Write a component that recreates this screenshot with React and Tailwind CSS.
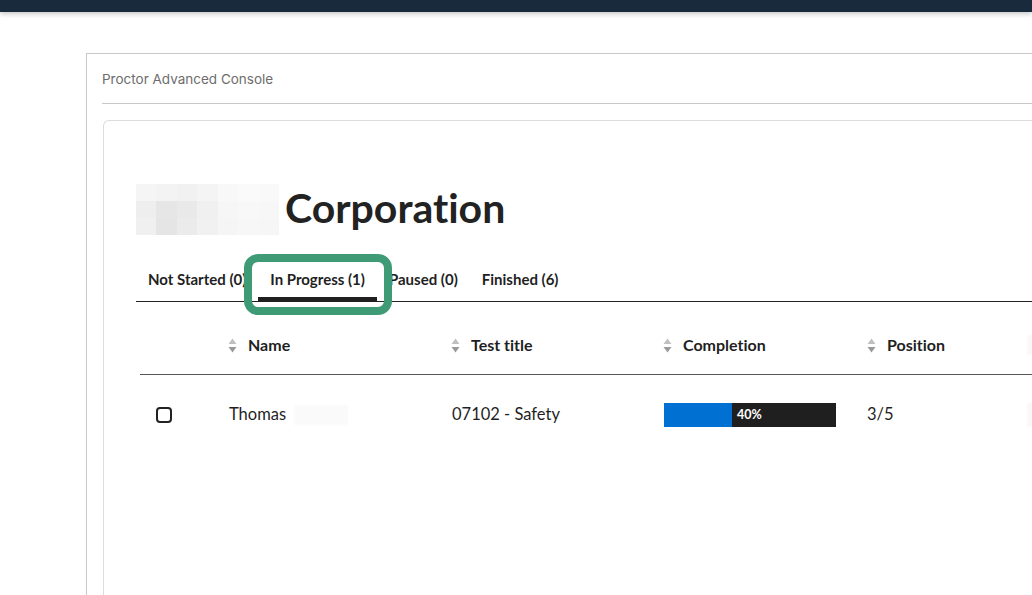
const tabs = [
  { label: 'Not Started (0)' },
  { label: 'In Progress (1)', active: true },
  { label: 'Paused (0)' },
  { label: 'Finished (6)' },
]

const columns = [
  { label: 'Name', width: 'w-[223px]' },
  { label: 'Test title', width: 'w-[212px]' },
  { label: 'Completion', width: 'w-[204px]' },
  { label: 'Position', width: 'w-[160px]' },
]

// blurred-out logo next to the company name
const logoCells = [
  '#f5f5f5', '#f3f3f3', '#f1f1f1', '#f4f4f4', '#f8f8f8', '#fafafa', '#f9f9f9',
  '#eeeeee', '#e6e6e6', '#e9e9e9', '#f0f0f0', '#f6f6f6', '#f8f8f8', '#f7f7f7',
  '#f0f0f0', '#e5e5e5', '#ebebeb', '#f1f1f1', '#f5f5f5', '#f7f7f7', '#f6f6f6',
]

const SortIcon = () => (
  <svg width="9" height="15" viewBox="0 0 9 15" className="shrink-0">
    <path d="M4.5 0.5 L8.5 6 L0.5 6 Z" fill="#c0c0c0" />
    <path d="M0.5 9 L8.5 9 L4.5 14.5 Z" fill="#9a9a9a" />
  </svg>
)

export default function App() {
  return (
    <div className="relative h-[595px] w-[1032px] overflow-hidden bg-white font-['Lato','Open_Sans',sans-serif] text-[#1f1f1f] [font-variant-ligatures:none]">
      <div className="h-3 bg-[#1a2a3d] shadow-[0_2px_5px_rgba(0,0,0,0.22)]" />

      <div className="pl-[86px] pt-[41px]">
        <div className="h-[560px] border-l border-t border-[#c9c9c9] pl-[15px]">
          <div className="flex h-[50px] items-center border-b border-[#c9c9c9] pt-px font-['Inter',sans-serif] text-[13.5px] text-[#6d6d6d]">
            Proctor Advanced Console
          </div>

          <div className="ml-px mt-4 h-[500px] rounded-tl-md border-l border-t border-[#dcdcdc] pl-8 pt-[63px]">
            <div className="flex h-[51px] items-center">
              <div className="grid h-[51px] w-[143px] grid-cols-7 grid-rows-3 overflow-hidden">
                {logoCells.map((c, i) => (
                  <div key={i} style={{ backgroundColor: c }} />
                ))}
              </div>
              <h1 className="mb-[5px] ml-[6px] text-[41px] font-bold leading-none text-[#222]">Corporation</h1>
            </div>

            <div className="mt-[19px] flex h-[48px] border-b border-[#222] text-[15px] font-bold">
              {tabs.map((t) => (
                <div key={t.label} className="relative shrink-0 px-3 pt-[15px] leading-5">
                  {t.label}
                  {t.active && <div className="absolute -bottom-px left-0 right-0 h-[5px] bg-[#1f1f1f]" />}
                </div>
              ))}
            </div>

            <div className="ml-1 flex h-[73px] items-center border-b border-[#555] pl-[88px] pt-[14px] text-[16px] font-bold">
              {columns.map((c) => (
                <div key={c.label} className={`flex shrink-0 items-center gap-[11px] ${c.width}`}>
                  <SortIcon />
                  {c.label}
                </div>
              ))}
              <div className="h-5 w-3 shrink-0 bg-[#f8f8f8] blur-[1px]" />
            </div>

            <div className="ml-1 flex h-[80px] items-center pb-px text-[16.5px]">
              <div className="ml-[16px] h-[16px] w-[16px] shrink-0 rounded-[4px] border-2 border-[#222]" />
              <div className="ml-[57px] flex w-[223px] shrink-0 items-center">
                Thomas
                <div className="ml-2 h-5 w-[54px] bg-[#fafafa] blur-[1px]" />
              </div>
              <div className="w-[212px] shrink-0">07102 - Safety</div>
              <div className="flex h-6 w-[172px] shrink-0 bg-[#1f1f1f] text-[12.5px] font-bold leading-6 text-white">
                <div className="w-[68px] bg-[#0070d2]" />
                <span className="ml-[5px]">40%</span>
              </div>
              <div className="ml-[31px] w-[160px] shrink-0">3/5</div>
              <div className="h-6 w-3 shrink-0 bg-[#f8f8f8] blur-[1px]" />
            </div>
          </div>
        </div>
      </div>

      <div className="absolute left-[244px] top-[254px] h-[61px] w-[148px] rounded-[14px] border-8 border-[#3f9b76]" />
    </div>
  )
}
